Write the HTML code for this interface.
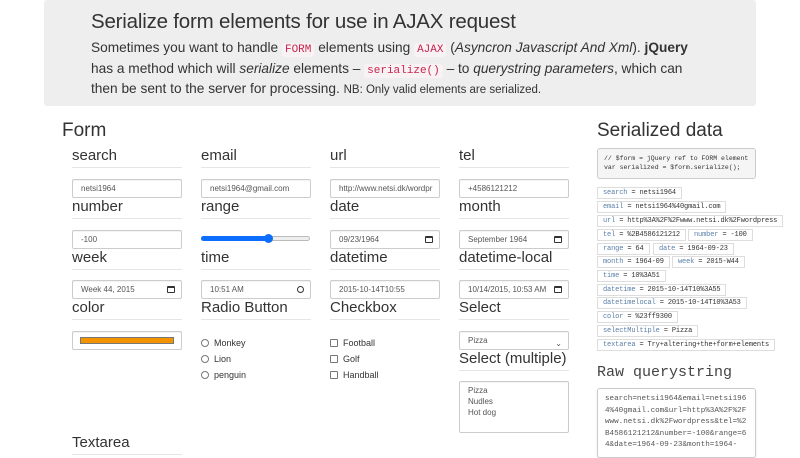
<!DOCTYPE html>
<html><head><meta charset="utf-8"><style>
*{box-sizing:border-box;margin:0;padding:0}
body{width:800px;height:450px;overflow:hidden;background:#fff;font-family:"Liberation Sans",sans-serif;color:#333;position:relative}
.a{position:absolute}
.hdr{left:44px;top:0;width:712px;height:106px;background:#eeeeee;border-radius:3px}
.hdr h1{position:absolute;left:47px;top:10px;font-size:20.5px;font-weight:normal;color:#333;letter-spacing:-0.2px}
.hdr p{position:absolute;left:47px;top:38px;width:620px;font-size:13.7px;line-height:20.5px;color:#333}
code{font-family:"Liberation Mono",monospace;font-size:11px;line-height:1;color:#c7254e;background:#f9f2f4;padding:1px 3px;border-radius:3px}
small{font-size:11.5px;line-height:1}
h2{position:absolute;font-size:19px;font-weight:normal;color:#333}
.lbl{position:absolute;width:110px;font-size:15px;color:#333;border-bottom:1px solid #e5e5e5;height:20px;line-height:16px}
.in{position:absolute;width:110px;height:19px;border:1px solid #ccc;border-radius:2px;font-size:8px;color:#555;padding:0 8px;line-height:17px;box-shadow:inset 0 1px 1px rgba(0,0,0,.05)}
.cal{position:absolute;right:6px;top:5px;width:8px;height:7px;border:1px solid #333;border-top-width:2px;border-radius:1px}
.opt{position:absolute;font-size:9px;color:#333}
.opt i{display:inline-block;width:8px;height:8px;border:1px solid #777;vertical-align:-1px;margin-right:5px}
.pill{position:absolute;font-family:"Liberation Mono",monospace;font-size:7px;letter-spacing:-0.15px;color:#333;border:1px solid #ddd;height:12px;line-height:10px;padding:0 5px;white-space:nowrap}
.pill b{font-weight:normal;color:#5a7fa8}
</style></head><body>
<div class="a hdr">
<h1>Serialize form elements for use in AJAX request</h1>
<p>Sometimes you want to handle <code>FORM</code> elements using <code>AJAX</code> (<i>Asyncron Javascript And Xml</i>). <b>jQuery</b> has a method which will <i>serialize</i> elements – <code>serialize()</code> – to <i>querystring parameters</i>, which can then be sent to the server for processing. <small>NB: Only valid elements are serialized.</small></p>
</div>

<h2 style="left:62px;top:120px">Form</h2>
<h2 style="left:597px;top:120px">Serialized data</h2>

<div class="lbl" style="left:72px;top:148px">search</div>
<div class="lbl" style="left:201px;top:148px">email</div>
<div class="lbl" style="left:330px;top:148px">url</div>
<div class="lbl" style="left:459px;top:148px">tel</div>
<div class="in" style="left:72px;top:179px">netsi1964</div>
<div class="in" style="left:201px;top:179px">netsi1964@gmail.com</div>
<div class="in" style="left:330px;top:179px;overflow:hidden;white-space:nowrap">http://www.netsi.dk/wordpr</div>
<div class="in" style="left:459px;top:179px">+4586121212</div>

<div class="lbl" style="left:72px;top:199px">number</div>
<div class="lbl" style="left:201px;top:199px">range</div>
<div class="lbl" style="left:330px;top:199px">date</div>
<div class="lbl" style="left:459px;top:199px">month</div>
<div class="in" style="left:72px;top:230px">-100</div>
<div class="a" style="left:201px;top:236px;width:109px;height:5px;border:1px solid #bbb;border-radius:3px;background:#eee"></div>
<div class="a" style="left:201px;top:236px;width:68px;height:5px;border-radius:3px;background:#0d6efd"></div>
<div class="a" style="left:264px;top:234px;width:9px;height:9px;border-radius:50%;background:#0d6efd"></div>
<div class="in" style="left:330px;top:230px">09/23/1964<span class="cal"></span></div>
<div class="in" style="left:459px;top:230px">September 1964<span class="cal"></span></div>

<div class="lbl" style="left:72px;top:250px">week</div>
<div class="lbl" style="left:201px;top:250px">time</div>
<div class="lbl" style="left:330px;top:250px">datetime</div>
<div class="lbl" style="left:459px;top:250px">datetime-local</div>
<div class="in" style="left:72px;top:280px">Week 44, 2015<span class="cal"></span></div>
<div class="in" style="left:201px;top:280px">10:51 AM<span class="a" style="right:6px;top:5px;width:7px;height:7px;border:1px solid #333;border-radius:50%"></span></div>
<div class="in" style="left:330px;top:280px">2015-10-14T10:55</div>
<div class="in" style="left:459px;top:280px">10/14/2015, 10:53 AM<span class="cal"></span></div>

<div class="lbl" style="left:72px;top:300px">color</div>
<div class="lbl" style="left:201px;top:300px">Radio Button</div>
<div class="lbl" style="left:330px;top:300px">Checkbox</div>
<div class="lbl" style="left:459px;top:300px">Select</div>
<div class="in" style="left:72px;top:331px;padding:5px 7px"><div style="background:#f39300;height:7px;border:1px solid #777"></div></div>
<div class="opt" style="left:201px;top:338px"><i style="border-radius:50%"></i>Monkey</div>
<div class="opt" style="left:201px;top:354px"><i style="border-radius:50%"></i>Lion</div>
<div class="opt" style="left:201px;top:370px"><i style="border-radius:50%"></i>penguin</div>
<div class="opt" style="left:330px;top:338px"><i style="border-radius:1px"></i>Football</div>
<div class="opt" style="left:330px;top:354px"><i style="border-radius:1px"></i>Golf</div>
<div class="opt" style="left:330px;top:370px"><i style="border-radius:1px"></i>Handball</div>
<div class="in" style="left:459px;top:331px">Pizza<span class="a" style="right:6px;top:3px;font-size:8px">&#8964;</span></div>
<div class="lbl" style="left:459px;top:351px">Select (multiple)</div>
<div class="in" style="left:459px;top:381px;height:52px;line-height:11px;padding-top:3px">Pizza<br>Nudles<br>Hot dog</div>

<div class="lbl" style="left:72px;top:435px">Textarea</div>

<div class="a" style="left:597px;top:148px;width:159px;height:31px;background:#f5f5f5;border:1px solid #ccc;border-radius:3px;font-family:'Liberation Mono',monospace;font-size:6.5px;line-height:9px;padding:5px 6px;color:#333;white-space:pre">// $form = jQuery ref to FORM element
var serialized = $form.serialize();</div>

<div class="pill" style="left:597px;top:187px"><b>search</b> = netsi1964</div>
<div class="pill" style="left:597px;top:201px"><b>email</b> = netsi1964%40gmail.com</div>
<div class="pill" style="left:597px;top:215px"><b>url</b> = http%3A%2F%2Fwww.netsi.dk%2Fwordpress</div>
<div class="pill" style="left:597px;top:229px"><b>tel</b> = %2B4586121212</div>
<div class="pill" style="left:688px;top:229px"><b>number</b> = -100</div>
<div class="pill" style="left:597px;top:243px"><b>range</b> = 64</div>
<div class="pill" style="left:653px;top:243px"><b>date</b> = 1964-09-23</div>
<div class="pill" style="left:597px;top:256px"><b>month</b> = 1964-09</div>
<div class="pill" style="left:672px;top:256px"><b>week</b> = 2015-W44</div>
<div class="pill" style="left:597px;top:270px"><b>time</b> = 10%3A51</div>
<div class="pill" style="left:597px;top:284px"><b>datetime</b> = 2015-10-14T10%3A55</div>
<div class="pill" style="left:597px;top:297px"><b>datetimelocal</b> = 2015-10-14T10%3A53</div>
<div class="pill" style="left:597px;top:311px"><b>color</b> = %23ff9300</div>
<div class="pill" style="left:597px;top:325px"><b>selectMultiple</b> = Pizza</div>
<div class="pill" style="left:597px;top:339px"><b>textarea</b> = Try+altering+the+form+elements</div>

<div class="a" style="left:597px;top:364px;font-family:'Liberation Mono',monospace;font-size:15px;color:#444">Raw querystring</div>
<div class="a" style="left:597px;top:388px;width:159px;height:70px;border:1px solid #ccc;border-radius:3px;box-shadow:0 1px 2px rgba(0,0,0,.1);font-family:'Liberation Mono',monospace;font-size:7.6px;line-height:11.5px;padding:5px 7px;color:#555;word-break:break-all">search=netsi1964&amp;email=netsi1964%40gmail.com&amp;url=http%3A%2F%2Fwww.netsi.dk%2Fwordpress&amp;tel=%2B4586121212&amp;number=-100&amp;range=64&amp;date=1964-09-23&amp;month=1964-</div>
</body></html>
